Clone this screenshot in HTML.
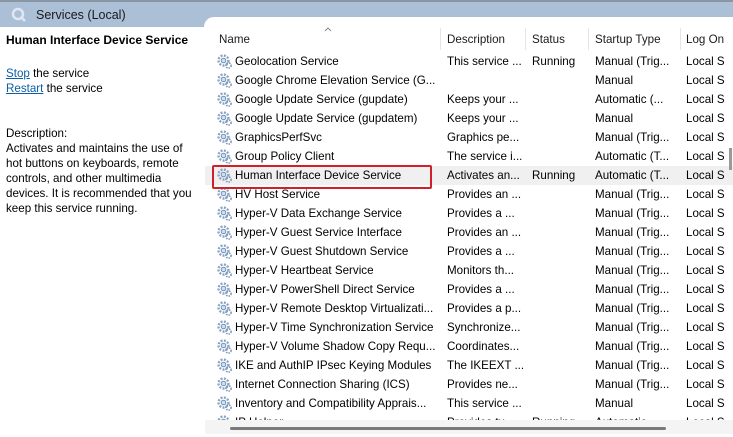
<!DOCTYPE html>
<html><head><style>
body{margin:0;width:733px;height:434px;overflow:hidden;background:#fff;font-family:"Liberation Sans",sans-serif;font-size:12px;color:#000;position:relative}
.top{position:absolute;left:0;top:0;width:733px;height:27px;background:#abbfd6;border-top:2px solid #8a96a3;box-sizing:border-box}
.top span{position:absolute;left:36px;top:6px;font-size:12.5px;color:#1a1a1a}
.right{position:absolute;left:204px;top:17px;width:540px;height:420px;background:#fff;border-top-left-radius:10px}
.l{position:absolute;left:6px;white-space:nowrap;font-size:11.6px;line-height:15px;z-index:2}
a{color:#0b5fa8;text-decoration:underline}
.r{position:absolute;left:205px;width:528px;height:19px;white-space:nowrap;font-size:11.6px}
.r span{position:absolute;top:3px}
.ic{position:absolute;left:12px;top:2px;width:15px;height:15px}
.h span{color:#1a1a1a}
.sep{position:absolute;top:28px;width:1px;height:22px;background:#e5e5e5}
</style></head><body>
<div class="top"><svg style="position:absolute;left:11px;top:5px" width="16" height="16"><circle cx="7" cy="7" r="5" fill="none" stroke="#dfe8f2" stroke-width="2.5"/><path d="M10 10l4 4" stroke="#dfe8f2" stroke-width="2.5"/></svg><span>Services (Local)</span></div>
<div class="right"></div>
<div class="l" style="top:33px;font-weight:bold;font-size:12px">Human Interface Device Service</div>
<div class="l" style="top:66px"><a>Stop</a> the service</div>
<div class="l" style="top:81px"><a>Restart</a> the service</div>
<div class="l" style="top:126px">Description:<br>Activates and maintains the use of<br>hot buttons on keyboards, remote<br>controls, and other multimedia<br>devices. It is recommended that you<br>keep this service running.</div>
<svg style="position:absolute;left:324px;top:26px" width="8" height="6"><path d="M1 5l3-3 3 3" fill="none" stroke="#888"/></svg>
<div class="sep" style="left:440px"></div><div class="sep" style="left:525px"></div><div class="sep" style="left:588px"></div><div class="sep" style="left:680px"></div>
<div class="r h" style="top:30px"><span style="left:14px">Name</span><span style="left:242px">Description</span><span style="left:327px">Status</span><span style="left:390px">Startup Type</span><span style="left:481px">Log On</span></div>
<div id="rows"></div>
<div style="position:absolute;left:212px;top:165px;width:216px;height:20px;border:2px solid #d0202a;border-radius:2px"></div>
<div style="position:absolute;left:205px;top:420px;width:528px;height:14px;background:#f4f4f4"></div>
<div style="position:absolute;left:230px;top:427px;width:436px;height:3px;background:#7a7a7a;border-radius:2px"></div>
<div style="position:absolute;left:729px;top:148px;width:3px;height:22px;background:#999"></div>
<script>
var d=[["Geolocation Service","This service ...","Running","Manual (Trig..."],
["Google Chrome Elevation Service (G...","","","Manual"],
["Google Update Service (gupdate)","Keeps your ...","","Automatic (..."],
["Google Update Service (gupdatem)","Keeps your ...","","Manual"],
["GraphicsPerfSvc","Graphics pe...","","Manual (Trig..."],
["Group Policy Client","The service i...","","Automatic (T..."],
["Human Interface Device Service","Activates an...","Running","Automatic (T..."],
["HV Host Service","Provides an ...","","Manual (Trig..."],
["Hyper-V Data Exchange Service","Provides a ...","","Manual (Trig..."],
["Hyper-V Guest Service Interface","Provides an ...","","Manual (Trig..."],
["Hyper-V Guest Shutdown Service","Provides a ...","","Manual (Trig..."],
["Hyper-V Heartbeat Service","Monitors th...","","Manual (Trig..."],
["Hyper-V PowerShell Direct Service","Provides a ...","","Manual (Trig..."],
["Hyper-V Remote Desktop Virtualizati...","Provides a p...","","Manual (Trig..."],
["Hyper-V Time Synchronization Service","Synchronize...","","Manual (Trig..."],
["Hyper-V Volume Shadow Copy Requ...","Coordinates...","","Manual (Trig..."],
["IKE and AuthIP IPsec Keying Modules","The IKEEXT ...","","Manual (Trig..."],
["Internet Connection Sharing (ICS)","Provides ne...","","Manual (Trig..."],
["Inventory and Compatibility Apprais...","This service ...","","Manual"],
["IP Helper","Provides tu...","Running","Automatic"]];
var h="";
var gear='<svg class="ic" viewBox="0 0 15 15"><circle cx="6.5" cy="6.5" r="5" fill="none" stroke="#8aa4c4" stroke-width="2.4" stroke-dasharray="2 1.4"/><circle cx="6.5" cy="6.5" r="2.3" fill="#cfe0f2" stroke="#6f8fb5"/><circle cx="11.5" cy="11.5" r="2.6" fill="none" stroke="#7d98bb" stroke-width="1.6" stroke-dasharray="1.5 1"/></svg>';
d.forEach(function(r,i){var t=52+19*i;h+='<div class="r" style="top:'+t+'px;'+(i==6?'background:#f0f0f0':'')+'">'+gear+'<span style="left:30px">'+r[0]+'</span><span style="left:242px">'+r[1]+'</span><span style="left:327px">'+r[2]+'</span><span style="left:390px">'+r[3]+'</span><span style="left:481px">Local S</span></div>';});
document.getElementById("rows").innerHTML=h;
</script>
</body></html>
